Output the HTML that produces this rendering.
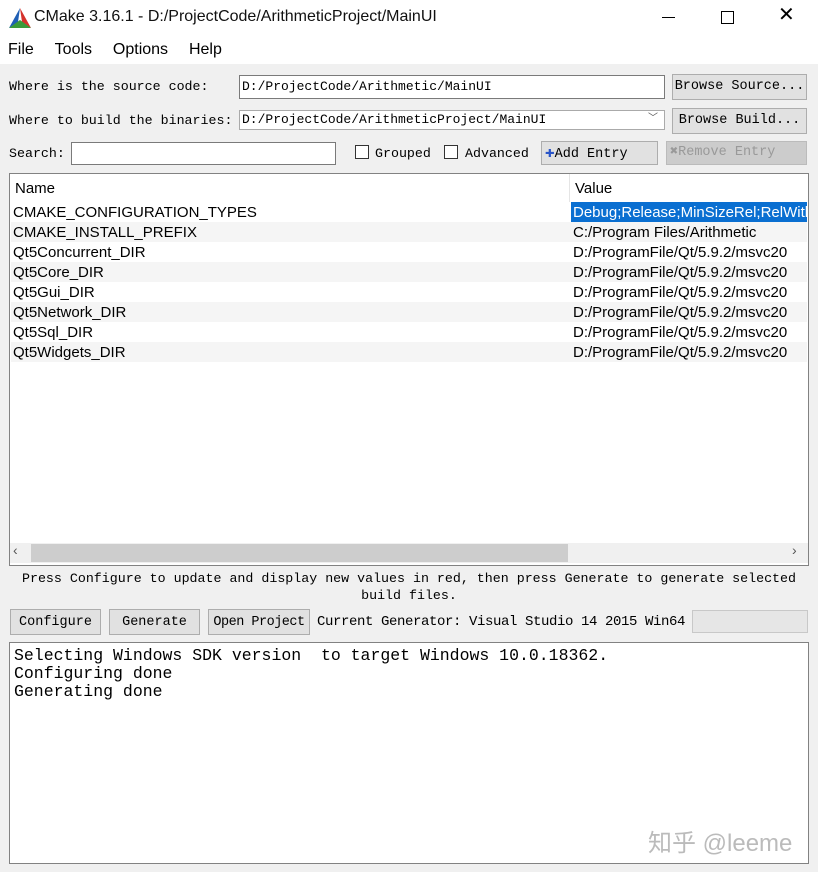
<!DOCTYPE html>
<html><head><meta charset="utf-8"><style>
*{margin:0;padding:0;box-sizing:border-box}
body{width:818px;height:872px;background:#f0f0f0;position:relative;overflow:hidden;font-family:"Liberation Sans","Noto Sans CJK SC",sans-serif}
.a{position:absolute;white-space:nowrap}
.m{font-family:"Liberation Mono","Noto Sans CJK SC",monospace;font-size:13.3px;color:#000}
.btn{position:absolute;background:#e1e1e1;border:1px solid #adadad;font-family:"Liberation Mono",monospace;font-size:13.5px;text-align:center}
.inp{position:absolute;background:#fff;border:1px solid #7a7a7a;font-family:"Liberation Mono",monospace;font-size:13px;padding-left:2px}
.row{position:absolute;left:11px;width:796px;height:20px;font-size:15px;line-height:22px}
.row span{position:absolute}
.row .n{left:2px}.row .v{left:562px}
.g{background:#f5f5f5}
.cb{position:absolute;width:14px;height:14px;border:1px solid #333;background:#fff}
</style></head><body>
<div class="a" style="left:0;top:0;width:818px;height:64px;background:#fff"></div>
<svg class="a" style="left:9px;top:8px" width="22" height="21" viewBox="0 0 22 21"><polygon points="11,0 0,20 9,14" fill="#1f5fb5"/><polygon points="11,0 22,20 13,14" fill="#d5322c"/><polygon points="0,20 22,20 11,12" fill="#3a9a3a"/></svg>
<div class="a" style="left:34px;top:8px;font-size:16px;color:#111">CMake 3.16.1 - D:/ProjectCode/ArithmeticProject/MainUI</div>
<div class="a" style="left:662px;top:17px;width:13px;height:1px;background:#000"></div>
<div class="a" style="left:721px;top:11px;width:13px;height:13px;border:1px solid #000"></div>
<div class="a" style="left:778px;top:2px;font-size:20px;color:#000">✕</div>
<div class="a" style="left:8px;top:41px;font-size:16px;color:#000;word-spacing:6px">File &nbsp;Tools &nbsp;Options &nbsp;Help</div>

<div class="a m" style="left:9px;top:79px">Where is the source code:</div>
<div class="inp" style="left:239px;top:75px;width:426px;height:24px;line-height:22px">D:/ProjectCode/Arithmetic/MainUI</div>
<div class="btn" style="left:672px;top:74px;width:135px;height:26px;line-height:24px">Browse Source...</div>
<div class="a m" style="left:9px;top:113px">Where to build the binaries:</div>
<div class="inp" style="left:239px;top:110px;width:426px;height:20px;line-height:18px;border-color:#aaa">D:/ProjectCode/ArithmeticProject/MainUI<span style="position:absolute;right:6px;font-size:10px;color:#555">﹀</span></div>
<div class="btn" style="left:672px;top:108px;width:135px;height:26px;line-height:24px">Browse Build...</div>
<div class="a m" style="left:9px;top:146px">Search:</div>
<div class="inp" style="left:71px;top:142px;width:265px;height:23px"></div>
<div class="cb" style="left:355px;top:145px"></div>
<div class="a m" style="left:375px;top:146px">Grouped</div>
<div class="cb" style="left:444px;top:145px"></div>
<div class="a m" style="left:465px;top:146px">Advanced</div>
<div class="btn" style="left:541px;top:141px;width:117px;height:24px;line-height:22px;text-align:left;padding-left:3px"><span style="color:#2a55c8;font-weight:bold;font-size:16px">✚</span>Add Entry</div>
<div class="btn" style="left:666px;top:141px;width:141px;height:24px;line-height:22px;color:#999;background:#ccc;border-color:#bbb;text-align:left;padding-left:3px">✖Remove Entry</div>

<div class="a" style="left:9px;top:173px;width:800px;height:393px;background:#fff;border:1px solid #828282"></div>
<div class="a" style="left:569px;top:174px;width:1px;height:28px;background:#e5e5e5"></div>
<div class="a" style="left:15px;top:180px;font-size:15px">Name</div>
<div class="a" style="left:575px;top:180px;font-size:15px">Value</div>
<div class="row" style="top:202px"><span class="n">CMAKE_CONFIGURATION_TYPES</span><span style="position:absolute;left:560px;width:236px;height:20px;background:#0a6fd1;color:#fff;padding-left:2px;overflow:hidden">Debug;Release;MinSizeRel;RelWithDebInfo</span></div>
<div class="row g" style="top:222px"><span class="n">CMAKE_INSTALL_PREFIX</span><span class="v">C:/Program Files/Arithmetic</span></div>
<div class="row" style="top:242px"><span class="n">Qt5Concurrent_DIR</span><span class="v">D:/ProgramFile/Qt/5.9.2/msvc20</span></div>
<div class="row g" style="top:262px"><span class="n">Qt5Core_DIR</span><span class="v">D:/ProgramFile/Qt/5.9.2/msvc20</span></div>
<div class="row" style="top:282px"><span class="n">Qt5Gui_DIR</span><span class="v">D:/ProgramFile/Qt/5.9.2/msvc20</span></div>
<div class="row g" style="top:302px"><span class="n">Qt5Network_DIR</span><span class="v">D:/ProgramFile/Qt/5.9.2/msvc20</span></div>
<div class="row" style="top:322px"><span class="n">Qt5Sql_DIR</span><span class="v">D:/ProgramFile/Qt/5.9.2/msvc20</span></div>
<div class="row g" style="top:342px"><span class="n">Qt5Widgets_DIR</span><span class="v">D:/ProgramFile/Qt/5.9.2/msvc20</span></div>
<div class="a" style="left:10px;top:543px;width:798px;height:20px;background:#f0f0f0"></div>
<div class="a" style="left:31px;top:544px;width:537px;height:18px;background:#cdcdcd"></div>
<div class="a" style="left:13px;top:542px;font-size:14px;color:#555">‹</div>
<div class="a" style="left:792px;top:542px;font-size:14px;color:#555">›</div>

<div class="a m" style="left:0;top:570px;width:818px;text-align:center;font-size:13.3px;line-height:17px">Press Configure to update and display new values in red, then press Generate to generate selected</div>
<div class="a m" style="left:0;top:587px;width:818px;text-align:center;font-size:13.3px;line-height:17px">build files.</div>
<div class="btn" style="left:10px;top:609px;width:91px;height:26px;line-height:25px">Configure</div>
<div class="btn" style="left:109px;top:609px;width:91px;height:26px;line-height:25px">Generate</div>
<div class="btn" style="left:208px;top:609px;width:102px;height:26px;line-height:25px;letter-spacing:-0.5px">Open Project</div>
<div class="a m" style="left:317px;top:614px;font-size:14px;letter-spacing:-0.4px">Current Generator: Visual Studio 14 2015 Win64</div>
<div class="a" style="left:692px;top:610px;width:116px;height:23px;background:#e6e6e6;border:1px solid #c8c8c8"></div>
<div class="a" style="left:9px;top:642px;width:800px;height:222px;background:#fff;border:1px solid #828282"></div>
<div class="a m" style="left:14px;top:647px;font-size:16.5px;line-height:18px;white-space:pre">Selecting Windows SDK version  to target Windows 10.0.18362.
Configuring done
Generating done</div>
<div class="a" style="left:648px;top:823px;font-size:24px;color:#bbb;font-family:'Liberation Sans','Noto Sans CJK SC',sans-serif">知乎 @leeme</div>
</body></html>
